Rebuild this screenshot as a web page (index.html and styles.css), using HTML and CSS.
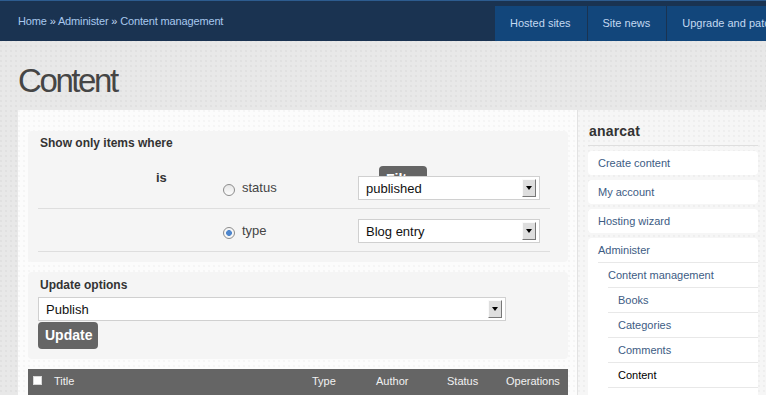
FILE: index.html
```html
<!DOCTYPE html>
<html lang="en">
<head>
<meta charset="utf-8">
<title>Content</title>
<link rel="stylesheet" href="styles.css">
</head>
<body>
<header class="top">
  <div class="crumbs"><a href="#">Home</a> <span class="sep">»</span> <a href="#">Administer</a> <span class="sep">»</span> <a href="#">Content management</a></div>
  <nav class="tabs">
    <a class="tab" href="#">Hosted sites</a>
    <a class="tab" href="#">Site news</a>
    <a class="tab" href="#">Upgrade and patches</a>
  </nav>
</header>
<h1 class="title">Content</h1>
<div class="page">
  <main class="main">
    <form class="box filter">
      <div class="legend">Show only items where</div>
      <div class="rows">
        <div class="frow">
          <div class="is">is</div>
          <label class="opt"><span class="radio"></span>status</label>
          <div class="selcol">
            <span class="btn filter-btn">Filter</span>
            <div class="select"><span class="val">published</span><span class="arrow"></span></div>
          </div>
        </div>
        <div class="frow">
          <div></div>
          <label class="opt"><span class="radio on"></span>type</label>
          <div class="selcol">
            <div class="select"><span class="val">Blog entry</span><span class="arrow"></span></div>
          </div>
        </div>
      </div>
    </form>
    <form class="box update">
      <div class="legend">Update options</div>
      <div class="select wide"><span class="val">Publish</span><span class="arrow"></span></div>
      <span class="btn update-btn">Update</span>
    </form>
    <div class="thead">
      <span class="cell"><span class="cb"></span></span>
      <span class="cell">Title</span>
      <span class="cell">Type</span>
      <span class="cell">Author</span>
      <span class="cell">Status</span>
      <span class="cell">Operations</span>
    </div>
  </main>
  <aside class="side">
    <h2 class="user">anarcat</h2>
    <ul class="menu">
      <li><a href="#">Create content</a></li>
      <li><a href="#">My account</a></li>
      <li><a href="#">Hosting wizard</a></li>
      <li><a href="#">Administer</a>
        <ul class="sub">
          <li><a href="#">Content management</a>
            <ul class="sub">
              <li><a href="#">Books</a></li>
              <li><a href="#">Categories</a></li>
              <li><a href="#">Comments</a></li>
              <li><a href="#" class="active">Content</a></li>
              <li><a href="#">Content types</a></li>
            </ul>
          </li>
        </ul>
      </li>
    </ul>
  </aside>
</div>
</body>
</html>
```

FILE: styles.css
```css
html, body {
  margin: 0;
  padding: 0;
  overflow: hidden;
}
body {
  width: 766px;
  height: 395px;
  font-family: "Liberation Sans", Arial, sans-serif;
  background-color: #e8e8e8;
  background-image: radial-gradient(circle at 1px 1px, #d9d9d9 0.5px, transparent 0.9px);
  background-size: 5px 5px;
}

/* header */
.top {
  display: flex;
  height: 40px;
  border-top: 1px solid #2d5c8f;
  background: #1a3351;
  overflow: hidden;
}
.crumbs {
  flex: 0 0 495px;
  box-sizing: border-box;
  padding-left: 18px;
  font-size: 11px;
  line-height: 40px;
  letter-spacing: -0.15px;
  color: #a8c8ee;
  white-space: nowrap;
}
.crumbs a {
  color: #a8c8ee;
  text-decoration: none;
}
.crumbs .sep {
  color: #c6dbf4;
}
.tabs {
  display: flex;
  flex-shrink: 0;
  gap: 1px;
  margin-top: 5px;
  white-space: nowrap;
}
.tab {
  display: block;
  height: 35px;
  padding: 0 16px 0 15px;
  background: #12467b;
  color: #c4d9f1;
  font-size: 11px;
  line-height: 35px;
  text-decoration: none;
}

/* title */
.title {
  margin: 20px 0 9px 18px;
  font-family: "Liberation Sans", Arial, sans-serif;
  font-size: 33px;
  font-weight: normal;
  line-height: 40px;
  letter-spacing: -2.4px;
  color: #454545;
}

/* page panel */
.page {
  display: flex;
  margin-left: 18px;
  height: 285px;
  background-color: #fcfcfc;
  background-image: radial-gradient(circle at 1px 1px, #f0f0f0 0.5px, transparent 0.9px);
  background-size: 5px 5px;
}
.main {
  width: 559px;
  box-sizing: border-box;
  padding: 21px 9px 0 10px;
}
.box {
  margin: 0;
  background: #f5f5f5;
  border-radius: 4px;
}
.legend {
  padding-left: 2px;
  font-size: 12px;
  font-weight: bold;
  line-height: 14px;
  color: #333;
}

/* filter */
.filter {
  padding: 5px 18px 10px 10px;
}
.rows {
  margin-top: 16px;
}
.frow {
  display: grid;
  grid-template-columns: 184px 136px 182px;
  align-items: center;
  padding: 10px 0 8px;
  border-bottom: 1px solid #dedede;
}
.is {
  align-self: start;
  margin-top: -6px;
  padding-left: 118px;
  font-size: 13px;
  font-weight: bold;
  line-height: 16px;
  color: #333;
}
.opt {
  display: flex;
  align-items: center;
  gap: 7px;
  padding-left: 1px;
  font-size: 13px;
  line-height: 16px;
  color: #444;
}
.radio {
  display: block;
  width: 12px;
  height: 12px;
  margin-top: 3px;
  box-sizing: border-box;
  border: 1px solid #8c8c8c;
  border-radius: 50%;
  background: linear-gradient(#e6e6e6, #fdfdfd);
}
.radio.on {
  background: radial-gradient(circle, #4f86cc 0 2.6px, #f6f6f6 3.2px);
}
.selcol {
  position: relative;
}
.select {
  position: relative;
  z-index: 1;
  display: flex;
  height: 24px;
  box-sizing: border-box;
  border: 1px solid #d0d0d0;
  background: #fff;
  font-size: 13px;
  color: #111;
}
.select .val {
  flex: 1;
  padding: 2px 0 0 7px;
  line-height: 20px;
  white-space: nowrap;
}
.arrow {
  display: flex;
  align-items: center;
  justify-content: center;
  width: 14px;
  height: 18px;
  margin: 2px 3px 0 0;
  box-sizing: border-box;
  border: 1px solid;
  border-color: #fafafa #777 #777 #fafafa;
  background: #dedede;
}
.arrow::after {
  content: "";
  border-top: 4px solid #000;
  border-left: 3px solid transparent;
  border-right: 3px solid transparent;
}
.btn {
  display: block;
  width: fit-content;
  height: 27px;
  padding: 0 7px;
  box-sizing: border-box;
  border-radius: 4px;
  background: #656565;
  color: #fff;
  font-size: 14px;
  font-weight: bold;
  line-height: 27px;
}
.filter-btn {
  position: absolute;
  top: -10px;
  left: 21px;
}

/* update */
.update {
  margin-top: 10px;
  padding: 6px 10px 10px;
}
.update .select {
  margin-top: 5px;
}
.select.wide {
  width: 468px;
}
.update-btn {
  margin-top: 1px;
  padding: 0 6px 0 7px;
}

/* table header */
.thead {
  display: grid;
  grid-template-columns: 26px 258px 64px 71px 59px 1fr;
  margin-top: 10px;
  padding: 6px 0 8px;
  background: #656565;
  color: #f2f2f2;
  font-size: 11px;
  line-height: 13px;
}
.cb {
  display: block;
  width: 9px;
  height: 9px;
  margin: 1px 0 0 5px;
  box-sizing: border-box;
  border: 1px solid #d8d8d8;
  background: #fff;
}

/* sidebar */
.side {
  width: 189px;
  box-sizing: border-box;
  padding: 13px 8px 0 10px;
  border-left: 1px solid #e2e2e2;
  background-color: #f6f6f6;
  background-image: radial-gradient(circle at 1px 1px, #e8e8e8 0.5px, transparent 0.9px);
  background-size: 5px 5px;
}
.user {
  margin: 0;
  padding: 0 0 5px 1px;
  border-bottom: 1px solid #dedede;
  font-size: 14px;
  font-weight: bold;
  line-height: 17px;
  letter-spacing: 0.2px;
  color: #333;
}
.menu {
  list-style: none;
  margin: 5px 0 0;
  padding: 0;
}
.menu > li {
  margin-bottom: 5px;
  padding-left: 10px;
  border-radius: 4px;
  background: #fff;
}
.menu a {
  display: block;
  font-size: 11px;
  line-height: 24px;
  color: #3d5c84;
  text-decoration: none;
}
.sub {
  list-style: none;
  margin: 0;
  padding: 0;
}
.sub li {
  border-top: 1px solid #e8e8e8;
}
.sub a {
  padding-left: 10px;
}
.sub .sub {
  margin-left: 10px;
}
.menu a.active {
  color: #000;
}
```
